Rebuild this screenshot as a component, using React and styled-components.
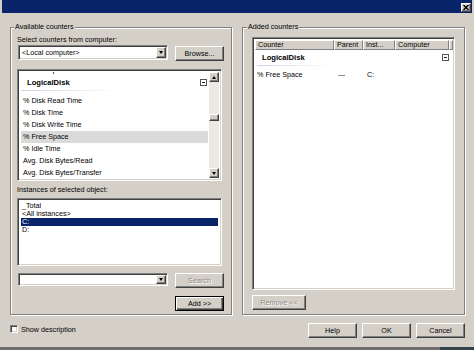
import React from 'react'
import styled, { createGlobalStyle, css } from 'styled-components'

const Global = createGlobalStyle`
  html, body { margin: 0; padding: 0; background: #d4d0c8; }
  body {
    font-family: "Liberation Sans", Arial, sans-serif;
    font-size: 7.2px;
    color: #000;
  }
`

const raised = css`
  border: 1px solid;
  border-color: #fff #404040 #404040 #fff;
  box-shadow: inset -1px -1px 0 #808080;
  background: #d4d0c8;
`

const sunken = css`
  border: 1px solid;
  border-color: #808080 #fff #fff #808080;
  box-shadow: inset 1px 1px 0 #404040, inset -1px -1px 0 #d4d0c8;
  background: #fff;
`

const Window = styled.div`
  width: 474px;
  height: 350px;
  overflow: hidden;
  background: #d4d0c8;
  display: flex;
  flex-direction: column;
`

const TitleBar = styled.div`
  height: 13px;
  margin: 0 2px;
  background: #0a246a;
  display: flex;
  justify-content: flex-end;
  align-items: flex-end;
  padding: 0 1px 1px 0;
  box-sizing: border-box;
`

const CloseBox = styled.div`
  ${raised};
  width: 10px;
  height: 9px;
  box-sizing: border-box;
  display: flex;
  align-items: center;
  justify-content: center;
`

const Columns = styled.div`
  display: flex;
  gap: 10px;
  padding: 10px 9px 0 10px;
`

const Group = styled.fieldset`
  margin: 0;
  padding: ${p => p.$right ? '0 9px 4px 9px' : '0 7px 3px 6px'};
  width: ${p => p.$right ? '223px' : '222px'};
  box-sizing: border-box;
  border: 1px solid #808080;
  box-shadow: inset 1px 1px 0 #fff, 1px 1px 0 #fff;
  min-width: 0;
  display: flex;
  flex-direction: column;
`

const Legend = styled.legend`
  margin-left: ${p => p.$offset}px;
  padding: 0 1px;
  line-height: 8px;
  background: #d4d0c8;
`

const Label = styled.div`
  line-height: 8px;
  margin-top: ${p => p.$top}px;
`

const FieldRow = styled.div`
  display: flex;
  justify-content: space-between;
  align-items: flex-start;
  margin-top: ${p => p.$top}px;
`

const Combo = styled.div`
  ${sunken};
  box-sizing: border-box;
  width: 150px;
  height: ${p => p.$h}px;
  margin-left: 1px;
  display: flex;
  align-items: center;
  padding: 0 1px 0 3px;
  justify-content: space-between;
`

const DropBtn = styled.div`
  ${raised};
  box-sizing: border-box;
  width: 10px;
  height: calc(100% - 2px);
  display: flex;
  align-items: center;
  justify-content: center;
`

const Arrow = styled.span`
  width: 0;
  height: 0;
  border-left: 2.5px solid transparent;
  border-right: 2.5px solid transparent;
  ${p => p.$up
    ? 'border-bottom: 3px solid #000;'
    : 'border-top: 3px solid #000;'}
`

const Button = styled.div`
  ${raised};
  box-sizing: border-box;
  width: ${p => p.$w || 49}px;
  height: 15px;
  margin-top: ${p => p.$top || 0}px;
  display: flex;
  align-items: center;
  justify-content: center;
  ${p => p.$disabled && css`
    color: #8c8a85;
    text-shadow: 1px 1px 0 #fff;
  `}
  ${p => p.$default && css`
    border: 1px solid #000;
    box-shadow: inset 1px 1px 0 #fff, inset -1px -1px 0 #404040, inset -2px -2px 0 #808080;
  `}
`

const ListBox = styled.div`
  ${sunken};
  box-sizing: border-box;
  width: 205px;
  height: ${p => p.$h}px;
  margin-top: ${p => p.$top}px;
  padding: 2px;
  display: flex;
  overflow: hidden;
`

const ListArea = styled.div`
  flex: 1;
  overflow: hidden;
  display: flex;
  flex-direction: column;
`

const Peek = styled.div`
  height: 5px;
  padding-left: 33px;
`

const Tick = styled.span`
  display: block;
  width: 1px;
  height: 2px;
  background: #555;
`

const GroupRow = styled.div`
  display: flex;
  align-items: center;
  justify-content: space-between;
  height: ${p => p.$h}px;
  padding: 0 ${p => p.$pr}px 0 ${p => p.$pl}px;
  font-weight: bold;
  font-size: 7.6px;
  flex-shrink: 0;
`

const Underline = styled.div`
  height: 1px;
  margin: 0 ${p => p.$mr}px ${p => p.$mb}px ${p => p.$ml}px;
  background: linear-gradient(to right, #c9d3e2, rgba(201, 211, 226, 0));
  flex-shrink: 0;
`

const Item = styled.div`
  height: ${p => p.$h}px;
  line-height: ${p => p.$h}px;
  padding-left: ${p => p.$pl}px;
  margin: 0 1px;
  flex-shrink: 0;
  white-space: nowrap;
  background: ${p => p.$sel === 'gray' ? '#dadada' : p.$sel === 'blue' ? '#0a246a' : 'transparent'};
  color: ${p => p.$sel === 'blue' ? '#fff' : '#000'};
`

const ScrollBar = styled.div`
  width: 10px;
  display: flex;
  flex-direction: column;
  background: #ebe9e4;
`

const ScrollBtn = styled.div`
  ${raised};
  box-sizing: border-box;
  height: 10px;
  display: flex;
  align-items: center;
  justify-content: center;
`

const Track = styled.div`
  flex: 1;
`

const Thumb = styled.div`
  ${raised};
  box-sizing: border-box;
  height: 7px;
  margin-top: 32px;
`

const Collapse = () => (
  <svg width="7" height="7" viewBox="0 0 7 7">
    <rect x="0.5" y="0.5" width="6" height="6" fill="#fff" stroke="#555" />
    <line x1="2" y1="3.5" x2="5" y2="3.5" stroke="#222" />
  </svg>
)

const CloseGlyph = () => (
  <svg width="6" height="5" viewBox="0 0 6 5">
    <path d="M0.5 0 L5.5 5 M5.5 0 L0.5 5" stroke="#000" strokeWidth="1.4" />
  </svg>
)

const Table = styled.div`
  ${sunken};
  box-sizing: border-box;
  flex: 1;
  margin-top: 6px;
  padding: 2px;
  display: flex;
  flex-direction: column;
`

const HeaderRow = styled.div`
  display: flex;
  height: 10px;
  flex-shrink: 0;
`

const HeadCell = styled.div`
  ${raised};
  box-shadow: none;
  border-color: #fff #808080 #808080 #fff;
  box-sizing: border-box;
  width: ${p => p.$w}px;
  flex: ${p => p.$w ? 'none' : 1};
  line-height: 8px;
  padding-left: 2px;
  white-space: nowrap;
  overflow: hidden;
`

const DataRow = styled.div`
  display: flex;
  height: 12px;
  line-height: 12px;
  margin-top: 3px;
`

const DataCell = styled.div`
  width: ${p => p.$w}px;
  padding-left: ${p => p.$pl}px;
  box-sizing: border-box;
  white-space: nowrap;
`

const Footer = styled.div`
  display: flex;
  align-items: center;
  margin-top: 8px;
  padding: 0 9px 0 10px;
  height: 15px;
`

const Check = styled.label`
  display: flex;
  align-items: center;
  gap: 3px;
  flex: 1;
  margin-top: -3px;
`

const CheckBox = styled.span`
  ${sunken};
  width: 8px;
  height: 8px;
  box-sizing: border-box;
`

const Buttons = styled.div`
  display: flex;
  gap: 5px;
`

const Spacer = styled.div`
  flex: 1;
`

const Taskbar = styled.div`
  height: 3px;
  display: flex;
  background: #6d6d6d;
`

const TaskEnd = styled.div`
  width: 34px;
  margin-left: auto;
  background: #34424c;
`

const counters = [
  '% Disk Read Time',
  '% Disk Time',
  '% Disk Write Time',
  '% Free Space',
  '% Idle Time',
  'Avg. Disk Bytes/Read',
  'Avg. Disk Bytes/Transfer',
]

const instances = ['_Total', '<All instances>', 'C:', 'D:']

export default function App() {
  return (
    <Window>
      <Global />
      <TitleBar>
        <CloseBox><CloseGlyph /></CloseBox>
      </TitleBar>
      <Columns>
        <Group>
          <Legend $offset={-3}>Available counters</Legend>
          <Label $top={5}>Select counters from computer:</Label>
          <FieldRow $top={1}>
            <Combo $h={15}>
              <span>&lt;Local computer&gt;</span>
              <DropBtn><Arrow /></DropBtn>
            </Combo>
            <Button $top={1}>Browse...</Button>
          </FieldRow>
          <ListBox $h={112} $top={8}>
            <ListArea>
              <Peek><Tick /></Peek>
              <GroupRow $h={16} $pl={7} $pr={2}>
                <span>LogicalDisk</span>
                <Collapse />
              </GroupRow>
              <Underline $ml={1} $mr={90} $mb={4} />
              {counters.map(c => (
                <Item key={c} $h={12} $pl={2} $sel={c === '% Free Space' ? 'gray' : null}>{c}</Item>
              ))}
            </ListArea>
            <ScrollBar>
              <ScrollBtn><Arrow $up /></ScrollBtn>
              <Track><Thumb /></Track>
              <ScrollBtn><Arrow /></ScrollBtn>
            </ScrollBar>
          </ListBox>
          <Label $top={5}>Instances of selected object:</Label>
          <ListBox $h={68} $top={4}>
            <ListArea>
              <Item $h={1} $pl={0} />
              {instances.map(i => (
                <Item key={i} $h={8} $pl={1} $sel={i === 'C:' ? 'blue' : null}>{i}</Item>
              ))}
            </ListArea>
          </ListBox>
          <FieldRow $top={7}>
            <Combo $h={13}>
              <span />
              <DropBtn><Arrow /></DropBtn>
            </Combo>
            <Button $disabled>Search</Button>
          </FieldRow>
          <FieldRow $top={8}>
            <span />
            <Button $default>Add &gt;&gt;</Button>
          </FieldRow>
        </Group>
        <Group $right>
          <Legend $offset={-5}>Added counters</Legend>
          <Table>
            <HeaderRow>
              <HeadCell $w={79}>Counter</HeadCell>
              <HeadCell $w={29}>Parent</HeadCell>
              <HeadCell $w={32}>Inst...</HeadCell>
              <HeadCell $w={54}>Computer</HeadCell>
              <HeadCell />
            </HeaderRow>
            <GroupRow $h={15} $pl={7} $pr={3}>
              <span>LogicalDisk</span>
              <Collapse />
            </GroupRow>
            <Underline $ml={2} $mr={120} $mb={0} />
            <DataRow>
              <DataCell $w={79} $pl={2}>% Free Space</DataCell>
              <DataCell $w={29} $pl={4}>---</DataCell>
              <DataCell $w={32} $pl={4}>C:</DataCell>
            </DataRow>
          </Table>
          <Button $w={54} $top={5} $disabled>Remove &lt;&lt;</Button>
        </Group>
      </Columns>
      <Footer>
        <Check>
          <CheckBox />
          <span>Show description</span>
        </Check>
        <Buttons>
          <Button>Help</Button>
          <Button>OK</Button>
          <Button>Cancel</Button>
        </Buttons>
      </Footer>
      <Spacer />
      <Taskbar>
        <TaskEnd />
      </Taskbar>
    </Window>
  )
}
